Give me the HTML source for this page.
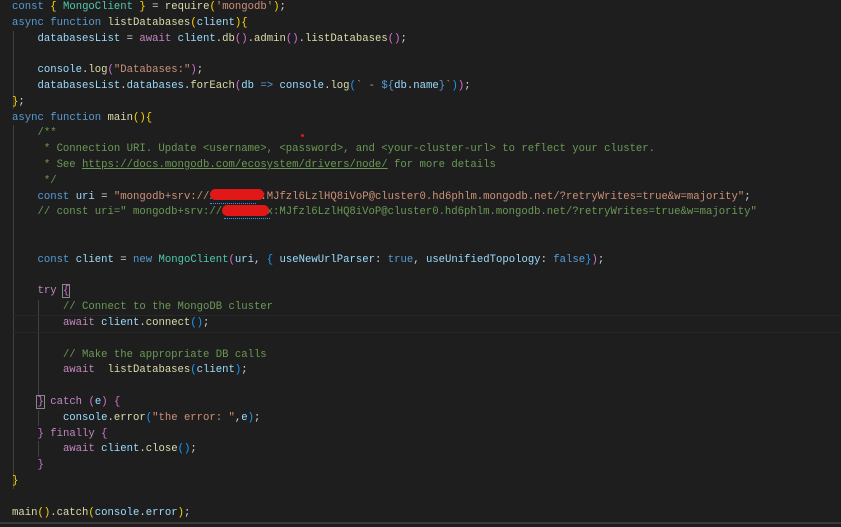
<!DOCTYPE html>
<html><head><meta charset="utf-8"><style>
html,body{margin:0;padding:0;background:#1e1e1e;width:841px;height:527px;overflow:hidden}
#c{position:absolute;left:12px;top:0px;font-family:"Liberation Mono",monospace;font-size:10.62px;line-height:15.8px;color:#d4d4d4;white-space:pre}
.k{color:#569cd6}.p{color:#c586c0}.v{color:#9cdcfe}.f{color:#dcdcaa}.s{color:#ce9178}.c{color:#6a9955}.t{color:#4ec9b0}
.y{color:#ffd700}.m{color:#da70d6}.b{color:#179fff}.u{text-decoration:underline}
.g{position:absolute;width:1px;background:#404040}
.r{position:absolute;background:#e01818;border-radius:6px}
.w{position:absolute;height:3px;border-bottom:1px dotted #3794ff}
</style></head><body>
<div class="g" style="left:13px;top:31px;height:78px"></div>
<div class="g" style="left:13px;top:125px;height:364px"></div>
<div class="g" style="left:38px;top:300px;height:95px"></div>
<div class="g" style="left:38px;top:410px;height:16px"></div>
<div class="g" style="left:38px;top:441px;height:16px"></div>
<div style="position:absolute;left:12px;top:315px;width:829px;height:16px;border-top:1px solid #282828;border-bottom:1px solid #282828"></div>
<div style="position:absolute;left:0;top:522px;width:841px;height:2px;background:#3a3a3a"></div>
<div id="c"><span class="k">const</span> <span class="y">{</span> <span class="t">MongoClient</span> <span class="y">}</span> = <span class="f">require</span><span class="y">(</span><span class="s">'mongodb'</span><span class="y">)</span>;
<span class="k">async</span> <span class="k">function</span> <span class="f">listDatabases</span><span class="y">(</span><span class="v">client</span><span class="y">){</span>
    <span class="v">databasesList</span> = <span class="p">await</span> <span class="v">client</span>.<span class="f">db</span><span class="m">()</span>.<span class="f">admin</span><span class="m">()</span>.<span class="f">listDatabases</span><span class="m">()</span>;

    <span class="v">console</span>.<span class="f">log</span><span class="m">(</span><span class="s">"Databases:"</span><span class="m">)</span>;
    <span class="v">databasesList</span>.<span class="v">databases</span>.<span class="f">forEach</span><span class="m">(</span><span class="v">db</span> <span class="k">=&gt;</span> <span class="v">console</span>.<span class="f">log</span><span class="b">(</span><span class="s">` - </span><span class="k">${</span><span class="v">db</span>.<span class="v">name</span><span class="k">}</span><span class="s">`</span><span class="b">)</span><span class="m">)</span>;
<span class="y">}</span>;
<span class="k">async</span> <span class="k">function</span> <span class="f">main</span><span class="y">(){</span>
<span class="c">    /**
     * Connection URI. Update &lt;username&gt;, &lt;password&gt;, and &lt;your-cluster-url&gt; to reflect your cluster.
     * See <span class="u">https://docs.mongodb.com/ecosystem/drivers/node/</span> for more details
     */</span>
    <span class="k">const</span> <span class="v">uri</span> = <span class="s">"mongodb+srv://xxxxxxxx:MJfzl6LzlHQ8iVoP@cluster0.hd6phlm.mongodb.net/?retryWrites=true&amp;w=majority"</span>;
    <span class="c">// const uri=" mongodb+srv://xxxxxxxx:MJfzl6LzlHQ8iVoP@cluster0.hd6phlm.mongodb.net/?retryWrites=true&amp;w=majority"</span>


    <span class="k">const</span> <span class="v">client</span> = <span class="k">new</span> <span class="t">MongoClient</span><span class="m">(</span><span class="v">uri</span>, <span class="b">{</span> <span class="v">useNewUrlParser</span>: <span class="k">true</span>, <span class="v">useUnifiedTopology</span>: <span class="k">false</span><span class="b">}</span><span class="m">)</span>;

    <span class="p">try</span> <span class="m" style="outline:1px solid #888">{</span>
        <span class="c">// Connect to the MongoDB cluster</span>
        <span class="p">await</span> <span class="v">client</span>.<span class="f">connect</span><span class="b">()</span>;

        <span class="c">// Make the appropriate DB calls</span>
        <span class="p">await</span>  <span class="f">listDatabases</span><span class="b">(</span><span class="v">client</span><span class="b">)</span>;

    <span class="m" style="outline:1px solid #888">}</span> <span class="p">catch</span> <span class="m">(</span><span class="v">e</span><span class="m">)</span> <span class="m">{</span>
        <span class="v">console</span>.<span class="f">error</span><span class="b">(</span><span class="s">"the error: "</span>,<span class="v">e</span><span class="b">)</span>;
    <span class="m">}</span> <span class="p">finally</span> <span class="m">{</span>
        <span class="p">await</span> <span class="v">client</span>.<span class="f">close</span><span class="b">()</span>;
    <span class="m">}</span>
<span class="y">}</span>

<span class="f">main</span><span class="y">()</span>.<span class="f">catch</span><span class="y">(</span><span class="v">console</span>.<span class="v">error</span><span class="y">)</span>;</div>
<div class="r" style="left:210px;top:189px;width:54px;height:11px"></div>
<div class="r" style="left:222px;top:205px;width:47px;height:11px"></div>
<div class="w" style="left:210px;top:200px;width:46px"></div>
<div class="w" style="left:224px;top:215px;width:46px"></div>
<div style="position:absolute;left:301px;top:134px;width:3px;height:3px;background:#e01818;border-radius:50%"></div>
</body></html>
